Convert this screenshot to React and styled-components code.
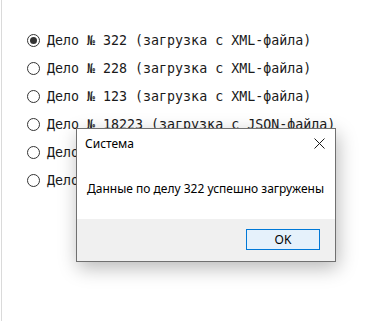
import React, { useState } from "react";
import styled, { createGlobalStyle } from "styled-components";

const GlobalStyle = createGlobalStyle`
  html, body {
    margin: 0;
    padding: 0;
    background: #ffffff;
  }
`;

const cases = [
  { id: 322, source: "XML" },
  { id: 228, source: "XML" },
  { id: 123, source: "XML" },
  { id: 18223, source: "JSON" },
  { id: 4512, source: "XML" },
  { id: 907, source: "JSON" },
];

const App = () => {
  const [selected, setSelected] = useState(322);

  return (
    <Page>
      <GlobalStyle />
      <CaseList>
        {cases.map((item) => (
          <CaseRow key={item.id} onClick={() => setSelected(item.id)}>
            <Radio checked={selected === item.id} />
            <CaseLabel>
              Дело № {item.id} (загрузка с {item.source}-файла)
            </CaseLabel>
          </CaseRow>
        ))}
      </CaseList>

      <Dialog>
        <TitleBar>
          <Title>Система</Title>
          <CloseButton>
            <svg width="11" height="11" viewBox="0 0 11 11">
              <path d="M0.5 0.5 L10.5 10.5 M10.5 0.5 L0.5 10.5" stroke="#1a1a1a" strokeWidth="1" fill="none" />
            </svg>
          </CloseButton>
        </TitleBar>
        <Message>Данные по делу 322 успешно загружены</Message>
        <Footer>
          <OkButton>OK</OkButton>
        </Footer>
      </Dialog>
    </Page>
  );
};

const Page = styled.div`
  position: relative;
  height: 321px;
  margin-left: 1px;
  border-left: 1px solid #dadada;
  box-sizing: border-box;
`;

const CaseList = styled.div`
  display: flex;
  flex-direction: column;
  padding: 26px 0 0 25px;
`;

const CaseRow = styled.label`
  display: flex;
  align-items: center;
  gap: 7px;
  height: 28px;
  cursor: pointer;
`;

const Radio = styled.span`
  width: 13px;
  height: 13px;
  box-sizing: border-box;
  border-radius: 50%;
  border: 1px solid #333333;
  display: flex;
  align-items: center;
  justify-content: center;
  flex-shrink: 0;

  &::after {
    content: "";
    width: 7px;
    height: 7px;
    border-radius: 50%;
    background: #333333;
    display: ${(p) => (p.checked ? "block" : "none")};
  }
`;

const CaseLabel = styled.span`
  font-family: "DejaVu Sans Mono", "Liberation Mono", monospace;
  font-size: 13.3px;
  color: #1a1a1a;
  white-space: nowrap;
`;

const Dialog = styled.div`
  position: absolute;
  left: 74px;
  top: 128px;
  width: 260px;
  height: 134px;
  box-sizing: border-box;
  border: 1px solid #707070;
  background: #ffffff;
  box-shadow: 2px 6px 18px rgba(0, 0, 0, 0.28);
  display: flex;
  flex-direction: column;
  font-family: "Noto Sans", "Open Sans", sans-serif;
  font-size: 12px;
  color: #000000;
`;

const TitleBar = styled.div`
  display: flex;
  align-items: center;
  justify-content: space-between;
  height: 29px;
  padding: 0 10px 0 8px;
`;

const Title = styled.span`
  font-size: 12px;
`;

const CloseButton = styled.span`
  display: flex;
  width: 11px;
  height: 11px;
`;

const Message = styled.div`
  flex: 1;
  display: flex;
  align-items: center;
  padding: 0 0 0 10px;
`;

const Footer = styled.div`
  height: 42px;
  background: #f0f0f0;
  display: flex;
  justify-content: flex-end;
  align-items: flex-start;
  padding: 10px 15px 0 0;
  box-sizing: border-box;
`;

const OkButton = styled.button`
  width: 74px;
  height: 21px;
  box-sizing: border-box;
  border: 1px solid #0078d7;
  background: #e5f1fb;
  font-family: "Noto Sans", "Open Sans", sans-serif;
  font-size: 12px;
  color: #000000;
  padding: 0;
`;

export default App;
